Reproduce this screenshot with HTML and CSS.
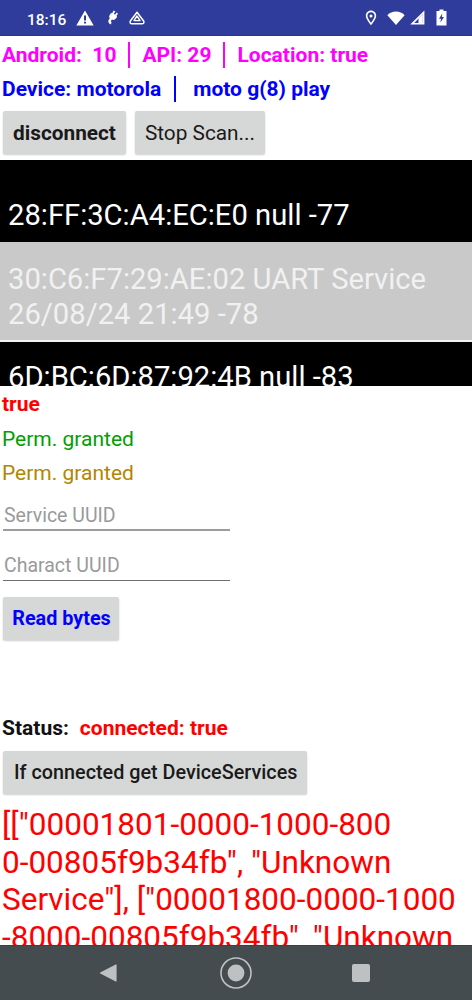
FILE: index.html
```html
<!DOCTYPE html>
<html lang="en">
<head>
<meta charset="utf-8">
<title>BLE Scanner</title>
<link rel="stylesheet" href="styles.css">
</head>
<body>
<div class="phone">
  <header class="statusbar">
    <span class="clock">18:16</span>
    <svg class="ic" width="18" height="16" viewBox="0 0 18 16"><path fill-rule="evenodd" fill="#fff" d="M9 .5 17.7 15.5H.3ZM8 5.5V10.5H10V5.5ZM8 11.7V13.6H10V11.7Z"/></svg>
    <svg class="ic plug" width="12" height="15" viewBox="0 0 12 15"><path fill="#fff" d="M7.6 .4 9.4 1.6 7.8 3.8 9 4.7 10.6 2.6 12 3.8 10.4 6 11.2 6.7 9.9 8.6C8.9 9.9 7.3 10.2 6 9.6L5.2 10.6C4.7 11.4 5.1 12.2 5.8 12.7L4.4 14.6C2.6 13.6 1.6 11.3 2.9 9.6L3.8 8.4C3 7.2 3 5.7 4 4.4L5.2 2.8 6 3.4Z"/></svg>
    <svg class="ic tri" width="16" height="14" viewBox="0 0 16 14"><path fill="none" stroke="#fff" stroke-width="1.5" stroke-linejoin="round" d="M8 1.2 14.8 10.2Q15.4 12.8 13 12.8H3Q.6 12.8 1.2 10.2Z"/><path fill="none" stroke="#fff" stroke-width="1.4" stroke-linejoin="round" d="M8 5 11 9.6H5Z"/></svg>
    <span class="spacer"></span>
    <svg class="ic" width="12" height="16" viewBox="0 0 12 16"><path fill-rule="evenodd" fill="#fff" d="M6 .6C9 .6 11.2 2.9 11.2 5.8 11.2 9.3 6 15.4 6 15.4S.8 9.3.8 5.8C.8 2.9 3 .6 6 .6ZM6 2.2C4 2.2 2.4 3.8 2.4 5.8 2.4 7.9 4.6 11 6 12.8 7.4 11 9.6 7.9 9.6 5.8 9.6 3.8 8 2.2 6 2.2ZM6 4.4A1.5 1.5 0 1 1 6 7.4 1.5 1.5 0 1 1 6 4.4Z"/></svg>
    <svg class="ic wifi" width="18" height="14" viewBox="0 0 18 14"><path fill="#fff" d="M9 14 .4 4.2C2.6 2 5.6.6 9 .6S15.4 2 17.6 4.2Z"/></svg>
    <svg class="ic signal" width="15" height="15" viewBox="0 0 15 15"><path fill-rule="evenodd" fill="#fff" d="M14.4.4V14.6H.2ZM12.8 4.2 4.2 13H12.8Z"/><path fill="#fff" d="M8.5 8.6 12.8 4.2V13H8.5Z"/></svg>
    <svg class="ic batt" width="11" height="17" viewBox="0 0 11 17"><path fill-rule="evenodd" fill="#fff" d="M3.5.5H7.5V2H10.5V16.5H.5V2H3.5ZM6.3 4.6 3 9.8H5L4.4 13.6 8 8H5.9Z"/></svg>
  </header>

  <main class="content">
    <div class="line magenta">
      <span>Android:&nbsp; 10</span><i class="sep"></i><span>API: 29</span><i class="sep"></i><span>Location: true</span>
    </div>
    <div class="line blue line-device">
      <span>Device: motorola</span><i class="sep sep-device"></i><span>moto g(8) play</span>
    </div>
    <div class="btn-row">
      <button class="btn btn-bold">disconnect</button>
      <button class="btn">Stop Scan...</button>
    </div>

    <section class="list">
      <div class="row row-first">28:FF:3C:A4:EC:E0 null -77</div>
      <div class="row row-selected">30:C6:F7:29:AE:02 UART Service<br>26/08/24 21:49 -78</div>
      <div class="row row-last">6D:BC:6D:87:92:4B null -83</div>
    </section>

    <div class="true-line">true</div>
    <div class="perm perm-green">Perm. granted</div>
    <div class="perm perm-amber">Perm. granted</div>

    <div class="field field-service">Service UUID</div>
    <div class="field field-charact">Charact UUID</div>

    <button class="btn btn-read">Read bytes</button>

    <div class="status"><b>Status:</b><span>connected: true</span></div>
    <button class="btn btn-services">If connected get DeviceServices</button>

    <div class="result">[["00001801-0000-1000-800<br>0-00805f9b34fb", "Unknown<br>Service"], ["00001800-0000-1000<br>-8000-00805f9b34fb", "Unknown</div>
  </main>

  <nav class="navbar">
    <svg width="20" height="20" viewBox="0 0 20 20"><path fill="#bdc1c2" stroke="#bdc1c2" stroke-width="1.2" stroke-linejoin="round" d="M17 2V18L1.5 10Z"/></svg>
    <svg width="32" height="32" viewBox="0 0 32 32"><circle cx="16" cy="16" r="15" fill="none" stroke="#bdc1c2" stroke-width="1.6"/><circle cx="16" cy="16" r="8.4" fill="#bdc1c2"/></svg>
    <svg width="18" height="18" viewBox="0 0 18 18"><rect x="0" y="0" width="18" height="18" rx="2" fill="#bdc1c2"/></svg>
  </nav>
</div>
</body>
</html>
```
FILE: styles.css
```css
* { box-sizing: border-box; }
html, body { margin: 0; padding: 0; }
body { background: #fff; font-family: Roboto, "Liberation Sans", sans-serif; }
.phone { width: 472px; height: 1000px; display: flex; flex-direction: column; overflow: hidden; }

.statusbar { height: 36px; flex: none; background: #2f3c9b; border-bottom: 1px solid #2a3588; color: #fff; display: flex; align-items: center; padding: 0 25px 0 27px; }
.clock { font-size: 15.5px; font-weight: 500; margin-right: 10px; margin-top: 4px; }
.ic { flex: none; display: block; }
.plug { margin-left: 12px; }
.tri { margin-left: 11px; }
.spacer { flex: 1; }
.wifi { margin-left: 10px; }
.signal { margin-left: 5px; }
.batt { margin-left: 11px; }

.content { flex: 1; min-height: 0; overflow: hidden; display: flex; flex-direction: column; align-items: flex-start; }
.content > * { flex: none; }

.line { display: flex; align-items: center; font-size: 21px; font-weight: 700; height: 27px; padding-left: 2px; margin-top: 5px; white-space: nowrap; }
.line-device { margin-top: 7px; }
.magenta { color: #ff00ff; }
.blue { color: #0000ff; }
.sep { display: block; width: 2px; height: 26px; background: currentColor; margin: 0 12px; }
.sep-device { margin: 0 17px 0 13px; }

.btn { display: block; border: 0; border-radius: 2px; background: #d6d7d7; color: #1a1a1a; font-family: inherit; font-size: 20.8px; height: 43px; padding: 0 10px; box-shadow: 0 1px 2px rgba(0,0,0,.2); white-space: nowrap; }
.btn-bold { font-weight: 700; }
.btn-row { display: flex; gap: 9px; margin: 9px 0 0 3px; }

.list { width: 472px; height: 226px; margin-top: 6px; overflow: hidden; background: #000; }
.row { color: #fff; font-size: 29.2px; line-height: 35px; padding-left: 8px; white-space: nowrap; }
.row-first { height: 82px; padding-top: 38px; background: #000; }
.row-selected { height: 100px; padding-top: 20px; background: #c9c9c9; color: #f1f1f1; border-bottom: 2px solid #f2f2f2; }
.row-last { padding-top: 18px; background: #000; }

.true-line { font-size: 21px; font-weight: 700; color: #ff0000; line-height: 27px; padding-left: 2px; margin-top: 5px; }
.perm { font-size: 21px; line-height: 27px; padding-left: 2px; margin-top: 7px; }
.perm-green { color: #00a000; margin-top: 8px; }
.perm-amber { color: #b38600; }

.field { width: 227px; margin-left: 3px; height: 32px; font-size: 19.5px; line-height: 33px; color: #9a9a9a; padding-left: 1px; }
.field-service { border-bottom: 2px solid #9c9c9c; margin-top: 12px; }
.field-charact { border-bottom: 1px solid #6f6f6f; margin-top: 18px; }

.btn-read { margin: 16px 0 0 3px; width: 116px; padding: 0 0 0 1px; font-size: 19.8px; font-weight: 700; color: #0000ff; }

.status { display: flex; gap: 11px; font-size: 21px; line-height: 27px; margin-top: 75px; padding-left: 2px; font-weight: 700; }
.status b { font-weight: 700; color: #111; }
.status span { color: #ff0000; }
.btn-services { margin: 9px 0 0 3px; padding: 0 10px 0 11px; font-weight: 500; font-size: 19.8px; }

.result { color: #ff0000; font-size: 31.5px; line-height: 37.5px; padding-left: 2px; margin-top: 12px; white-space: nowrap; }

.navbar { height: 55px; flex: none; background: #454c50; border-top: 1px solid #3a4044; display: flex; align-items: center; justify-content: space-between; padding: 0 102px 0 99px; }
```
